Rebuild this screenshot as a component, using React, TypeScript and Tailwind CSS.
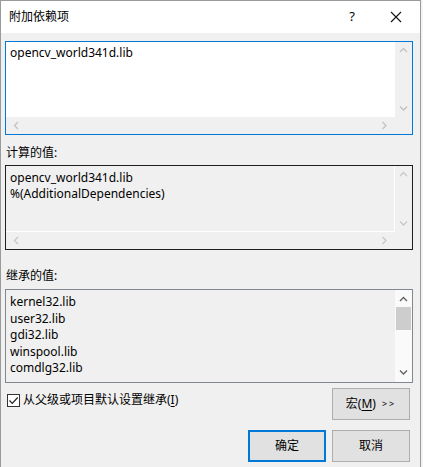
import React from 'react'

const font = { fontFamily: '"Noto Sans", "Noto Sans CJK SC", sans-serif' }

type Dir = 'up' | 'down' | 'left' | 'right'

function Chevron({ dir, color }: { dir: Dir; color: string }) {
  const paths: Record<Dir, string> = {
    up: 'M1 5 L4.5 1.5 L8 5',
    down: 'M1 1.5 L4.5 5 L8 1.5',
    left: 'M5 1 L1.5 4.5 L5 8',
    right: 'M1.5 1 L5 4.5 L1.5 8',
  }
  const vertical = dir === 'up' || dir === 'down'
  return (
    <svg width={vertical ? 9 : 7} height={vertical ? 7 : 9} viewBox={vertical ? '0 0 9 7' : '0 0 7 9'}>
      <path d={paths[dir]} fill="none" stroke={color} strokeWidth="1.3" />
    </svg>
  )
}

function Underlined({ children }: { children: React.ReactNode }) {
  return <span className="underline underline-offset-2">{children}</span>
}

export default function App() {
  return (
    <div className="w-[423px] h-[467px] bg-[#f4f4f4] text-[12px] text-black" style={font}>
      <div className="w-[421px] h-[467px] flex flex-col border-l border-r border-t border-[#9a9a9a] bg-[#f0f0f0]">
        {/* title bar */}
        <div className="h-[32px] bg-white flex items-center pl-[8px] shrink-0">
          <span className="flex-1 leading-[16px]">附加依赖项</span>
          <span className="w-[14px] text-[13px] mr-[31px] text-center">?</span>
          <svg width="12" height="12" viewBox="0 0 12 12" className="mr-[18px]">
            <path d="M1 1 L11 11 M11 1 L1 11" stroke="#111" strokeWidth="1.1" />
          </svg>
        </div>

        <div className="pl-[4px] pt-[8px]">
          {/* editable box */}
          <div className="w-[408px] h-[94px] border border-[#0078d7] bg-white grid grid-cols-[1fr_17px] grid-rows-[1fr_17px]">
            <div className="pl-[4px] pt-[3px] leading-[16px]">opencv_world341d.lib</div>
            <div className="bg-[#f0f0f0] flex flex-col items-center justify-between py-[5px]">
              <Chevron dir="up" color="#c2c2c2" />
              <Chevron dir="down" color="#c2c2c2" />
            </div>
            <div className="bg-[#f0f0f0] flex items-center justify-between px-[7px]">
              <Chevron dir="left" color="#c2c2c2" />
              <Chevron dir="right" color="#c2c2c2" />
            </div>
            <div className="bg-[#f0f0f0]" />
          </div>

          <div className="h-[30px] pt-[10px] pl-[1px] leading-[16px]">计算的值:</div>

          {/* evaluated box */}
          <div className="w-[408px] h-[85px] border border-[#1f1f1f] bg-[#f0f0f0] grid grid-cols-[1fr_17px] grid-rows-[1fr_17px]">
            <div className="pl-[4px] pt-[4px] leading-[16px] border-r border-b border-white">
              <div>opencv_world341d.lib</div>
              <div>%(AdditionalDependencies)</div>
            </div>
            <div className="flex flex-col items-center justify-between py-[5px]">
              <Chevron dir="up" color="#c8c8c8" />
              <Chevron dir="down" color="#c8c8c8" />
            </div>
            <div className="flex items-center justify-between px-[7px]">
              <Chevron dir="left" color="#c8c8c8" />
              <Chevron dir="right" color="#c8c8c8" />
            </div>
            <div />
          </div>

          <div className="h-[39px] pt-[18px] pl-[1px] leading-[16px]">继承的值:</div>

          {/* inherited box */}
          <div className="w-[408px] h-[94px] border border-[#828790] bg-[#f0f0f0] flex">
            <div className="flex-1 pl-[4px] pt-[4px] leading-[16.6px]">
              <div>kernel32.lib</div>
              <div>user32.lib</div>
              <div>gdi32.lib</div>
              <div>winspool.lib</div>
              <div>comdlg32.lib</div>
            </div>
            <div className="w-[17px] bg-[#fafafa] flex flex-col items-center py-[6px]">
              <Chevron dir="up" color="#606060" />
              <div className="w-[15px] h-[23px] bg-[#cdcdcd] mt-[4px]" />
              <div className="flex-1" />
              <Chevron dir="down" color="#606060" />
            </div>
          </div>

          {/* checkbox + macro button */}
          <div className="flex items-start mt-[5px] w-[408px]">
            <div className="flex items-center mt-[4px] ml-[2px] flex-1">
              <div className="w-[13px] h-[13px] border border-[#333] bg-white flex items-center justify-center">
                <svg width="11" height="11" viewBox="0 0 11 11">
                  <path d="M1.5 5.5 L4.3 8.3 L9.7 2.5" fill="none" stroke="#222" strokeWidth="1.2" />
                </svg>
              </div>
              <span className="ml-[3px] leading-[16px]">
                从父级或项目默认设置继承(<Underlined>I</Underlined>)
              </span>
            </div>
            <button className="w-[78px] h-[32px] border border-[#adadad] bg-[#e1e1e1] flex items-center justify-center mr-[3px]">
              <span>宏(<Underlined>M</Underlined>)</span>
              <span className="ml-[6px] text-[9px] tracking-[2px]">&gt;&gt;</span>
            </button>
          </div>

          {/* OK / Cancel */}
          <div className="flex justify-end gap-[6px] mt-[10px] w-[408px] pr-[3px]">
            <button className="w-[78px] h-[32px] border-2 border-[#0078d7] bg-[#e1e1e1] flex items-center justify-center">
              确定
            </button>
            <button className="w-[78px] h-[32px] border border-[#adadad] bg-[#e1e1e1] flex items-center justify-center">
              取消
            </button>
          </div>
        </div>
      </div>
    </div>
  )
}
